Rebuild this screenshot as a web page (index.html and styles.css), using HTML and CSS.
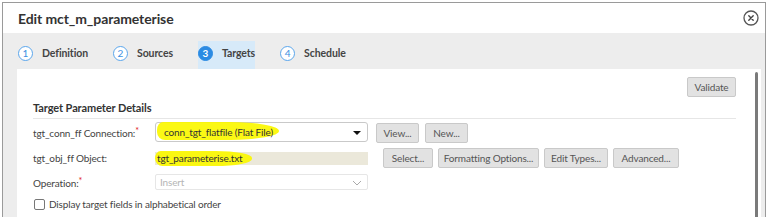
FILE: index.html
```html
<!DOCTYPE html>
<html>
<head>
<meta charset="utf-8">
<link rel="stylesheet" href="styles.css">
</head>
<body>
<div class="modal">
  <div class="header">
    <div class="title">Edit mct_m_parameterise</div>
    <svg class="close" width="16" height="16" viewBox="0 0 16 16">
      <circle cx="8" cy="8" r="7" fill="none" stroke="#555" stroke-width="1.3"/>
      <path d="M5.8 5.8 L10.2 10.2 M10.2 5.8 L5.8 10.2" stroke="#444" stroke-width="1.4" stroke-linecap="round"/>
    </svg>
  </div>
  <div class="tabs">
    <div class="tab"><span class="num">1</span><span class="tlabel">Definition</span></div>
    <div class="tab"><span class="num">2</span><span class="tlabel">Sources</span></div>
    <div class="tab active"><span class="num">3</span><span class="tlabel">Targets</span></div>
    <div class="tab"><span class="num">4</span><span class="tlabel">Schedule</span></div>
  </div>
  <div class="body">
    <div class="panel">
      <div class="main">
        <div class="toolbar"><button class="btn w-validate">Validate</button></div>
        <div class="section-title">Target Parameter Details</div>
        <div class="row r1">
          <div class="label">tgt_conn_ff Connection:<span class="req">*</span></div>
          <div class="select">
            <span class="hl hl1"></span>
            <span class="val">conn_tgt_flatfile (Flat File)</span>
            <span class="caret"></span>
          </div>
          <div class="btns g1">
            <button class="btn w-view">View...</button>
            <button class="btn w-new">New...</button>
          </div>
        </div>
        <div class="row r2">
          <div class="label">tgt_obj_ff Object:</div>
          <div class="input">
            <span class="hl hl2"></span>
            <span class="val">tgt_parameterise.txt</span>
          </div>
          <div class="btns g2">
            <button class="btn w-select">Select...</button>
            <button class="btn w-format">Formatting Options...</button>
            <button class="btn w-edit">Edit Types...</button>
            <button class="btn w-adv">Advanced...</button>
          </div>
        </div>
        <div class="row r3">
          <div class="label">Operation:<span class="req">*</span></div>
          <div class="dselect">
            <span class="val">Insert</span>
            <svg class="chev" width="10" height="6" viewBox="0 0 10 6"><path d="M1 1 L5 5 L9 1" fill="none" stroke="#aaa" stroke-width="1"/></svg>
          </div>
        </div>
        <div class="row r4">
          <span class="cb"></span>
          <span class="cblabel">Display target fields in alphabetical order</span>
        </div>
      </div>
      <div class="scroll"><div class="thumb"></div></div>
    </div>
  </div>
</div>
</body>
</html>
```
FILE: styles.css
```css
* { box-sizing: border-box; }
html, body { margin: 0; padding: 0; background: #fff; }
body {
  font-family: Lato, "Open Sans", sans-serif;
  font-size: 10px;
  letter-spacing: -0.15px;
  color: #444;
  width: 768px;
  height: 217px;
  overflow: hidden;
}
.modal {
  margin: 2px 0 0 2px;
  width: 764px;
  height: 215px;
  border: 1px solid #9a9a9a;
  border-bottom: none;
  background: #fff;
  display: flex;
  flex-direction: column;
}
.header {
  height: 30px;
  flex: none;
  display: flex;
  align-items: center;
  justify-content: space-between;
  padding: 0 6px 0 15px;
}
.title {
  font-size: 14px;
  font-weight: 700;
  color: #333;
  letter-spacing: -0.1px;
  padding-top: 1px;
}
.tabs {
  background: #ededed;
  height: 36px;
  flex: none;
  display: flex;
  align-items: flex-end;
  gap: 25px;
  padding-left: 15px;
}
.tab {
  height: 28px;
  display: flex;
  align-items: center;
  gap: 9px;
  padding-bottom: 4px;
}
.tab.active { background: #d7eaf9; }
.num {
  width: 15px;
  height: 15px;
  border-radius: 50%;
  border: 1.2px solid #5aa6ec;
  background: #fff;
  color: #3c90df;
  font-size: 10px;
  letter-spacing: 0;
  display: flex;
  align-items: center;
  justify-content: center;
}
.tab.active .num {
  background: #2b8be3;
  border-color: #2b8be3;
  color: #fff;
  font-weight: 700;
}
.tlabel {
  font-weight: 700;
  font-size: 10.5px;
  letter-spacing: -0.1px;
  color: #444;
}
.body {
  background: #ededed;
  padding: 0 4px 0 14px;
  flex: 1;
  min-height: 0;
}
.panel {
  background: #fff;
  height: 100%;
  display: flex;
}
.main {
  flex: 1;
  padding: 8px 4px 0 16px;
}
.scroll {
  width: 21px;
  padding: 3px 0 0 15px;
}
.thumb {
  width: 3px;
  height: 100%;
  background: #7a7a7a;
  border-radius: 2px 2px 0 0;
}
.toolbar {
  display: flex;
  justify-content: flex-end;
  height: 20px;
}
.btn {
  font-family: Lato, "Open Sans", sans-serif;
  font-size: 10px;
  letter-spacing: -0.15px;
  color: #555;
  background: #e2e2e2;
  border: 1px solid #c9c9c9;
  border-radius: 2px;
  height: 20px;
  padding: 0;
  margin: 0;
}
.w-validate { width: 49px; }
.w-view, .w-new { width: 43px; }
.w-select { width: 50px; }
.w-format { width: 101px; }
.w-edit { width: 64px; }
.w-adv { width: 66px; }
.section-title {
  margin-top: 4px;
  font-weight: 700;
  font-size: 11px;
  letter-spacing: -0.1px;
  color: #333;
  line-height: 14px;
  padding-bottom: 3px;
  border-bottom: 1px solid #e6e6e6;
}
.row {
  display: flex;
  align-items: center;
}
.label {
  width: 122px;
  color: #444;
}
.req { color: #e02020; vertical-align: 3px; font-size: 9px; }
.r1 { margin-top: 2px; height: 21px; }
.r2 { margin-top: 6px; height: 20px; }
.r3 { margin-top: 6px; height: 16px; }
.r4 { margin-top: 8px; height: 12px; }
.select, .input, .dselect {
  position: relative;
  width: 213px;
  display: flex;
  align-items: center;
}
.select {
  height: 20px;
  border: 1px solid #c9c9c9;
  border-radius: 3px;
  background: #fff;
  padding-left: 8px;
}
.input {
  height: 13px;
  background: #ebe8da;
  padding-left: 2px;
}
.dselect {
  height: 16px;
  border: 1px solid #e6e6e6;
  border-radius: 2px;
  padding-left: 4px;
}
.dselect .val { color: #b5b5b5; }
.chev { position: absolute; right: 5px; top: 5px; }
.val { position: relative; color: #333; }
.hl {
  position: absolute;
  background: #fbf700;
  border-radius: 6px 40% 40% 8px / 8px 50% 50% 8px;
  opacity: 0.92;
}
.hl1 { left: 1px; top: -1px; width: 122px; height: 18px; }
.hl2 { left: 0; top: -1px; width: 97px; height: 15px; }
.caret {
  position: absolute;
  right: 6px;
  top: 8px;
  width: 0;
  height: 0;
  border-left: 4px solid transparent;
  border-right: 4px solid transparent;
  border-top: 4px solid #111;
}
.btns { display: flex; }
.g1 { margin-left: 8px; gap: 6px; margin-top: 2px; }
.g2 { margin-left: 15px; gap: 5px; }
.cb {
  width: 11px;
  height: 11px;
  border: 1px solid #777;
  border-radius: 2px;
  margin-left: 1px;
}
.cblabel { margin-left: 4px; color: #444; }
```
